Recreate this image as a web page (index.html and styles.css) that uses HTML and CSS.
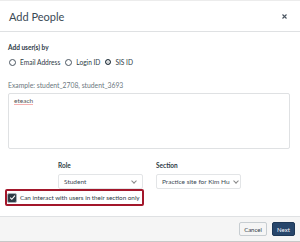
FILE: index.html
```html
<!DOCTYPE html>
<html lang="en">
<head>
<meta charset="UTF-8">
<title>Add People</title>
<link rel="stylesheet" href="styles.css">
</head>
<body>
<div class="modal">
  <div class="modal-header">
    <h1>Add People</h1>
    <svg class="close" width="5" height="5" viewBox="0 0 5 5"><path d="M0.5 0.5 L4.5 4.5 M4.5 0.5 L0.5 4.5" stroke="#4a5560" stroke-width="1.1"/></svg>
  </div>
  <div class="modal-body">
    <p class="field-label">Add user(s) by</p>
    <div class="radio-row">
      <label class="radio"><span class="dot"></span>Email Address</label>
      <label class="radio"><span class="dot"></span>Login ID</label>
      <label class="radio"><span class="dot on"></span>SIS ID</label>
    </div>
    <p class="hint">Example: student_2708, student_3693</p>
    <div class="textarea"><span class="typed">eteach</span></div>
    <div class="selects">
      <div class="select-group">
        <p class="field-label">Role</p>
        <div class="select">Student<span class="caret"></span></div>
      </div>
      <div class="select-group">
        <p class="field-label">Section</p>
        <div class="select">Practice site for Kim Hu<span class="caret"></span></div>
      </div>
    </div>
    <div class="check-row">
      <span class="checkbox">
        <svg width="7" height="7" viewBox="0 0 8 8"><path d="M1.3 4.2 L3.2 6 L6.8 1.8" fill="none" stroke="#fff" stroke-width="1.3"/></svg>
      </span>
      Can interact with users in their section only
    </div>
  </div>
  <div class="modal-footer">
    <button class="btn">Cancel</button>
    <button class="btn primary">Next</button>
  </div>
</div>
</body>
</html>
```

FILE: styles.css
```css
body {
  margin: 0;
  background: #fff;
  font-family: Lato, "Open Sans", sans-serif;
  color: #2d3b45;
}
.modal {
  width: 300px;
  height: 242px;
  box-sizing: border-box;
  border-top: 1px solid #ececec;
  border-bottom: 1px solid #c8c8c8;
  display: flex;
  flex-direction: column;
}
.modal-header {
  height: 30px;
  flex: none;
  border-bottom: 1px solid #dfe1e3;
  display: flex;
  align-items: center;
  justify-content: space-between;
  padding: 0 13px 0 9px;
}
.modal-header h1 {
  margin: 0;
  font-size: 11px;
  font-weight: 400;
  color: #3b4a55;
}
.modal-body {
  flex: 1;
  padding: 11px 8px 0;
}
.field-label {
  margin: 0;
  font-size: 6.5px;
  font-weight: 700;
  line-height: 10px;
}
.radio-row {
  display: flex;
  gap: 4px;
  margin-top: 4px;
  font-size: 6.6px;
  line-height: 10px;
}
.radio {
  display: flex;
  align-items: center;
  gap: 4px;
}
.dot {
  width: 5px;
  height: 5px;
  border: 1px solid #4a5560;
  border-radius: 50%;
  margin-left: 1px;
}
.dot.on {
  background: #2d3b45;
  box-shadow: inset 0 0 0 1.5px #fff;
  border-color: #2d3b45;
  border-width: 1.5px;
  width: 4px;
  height: 4px;
}
.hint {
  margin: 13px 0 0;
  font-size: 6.8px;
  line-height: 10px;
  color: #6b7780;
}
.textarea {
  margin-top: 3px;
  height: 56px;
  width: 282px;
  box-sizing: border-box;
  border: 1px solid #dfe1e3;
  border-radius: 2px;
  padding: 3px 5px;
  font-size: 6.5px;
  color: #555;
}
.typed {
  border-bottom: 1px solid #f5b0b0;
}
.selects {
  display: flex;
  gap: 13px;
  margin-top: 12px;
  padding-left: 50px;
}
.select-group .field-label {
  margin-bottom: 3px;
}
.select {
  width: 85px;
  height: 15px;
  box-sizing: border-box;
  border: 1px solid #e3e5e7;
  border-radius: 2px;
  font-size: 6.5px;
  white-space: nowrap;
  overflow: hidden;
  display: flex;
  align-items: center;
  justify-content: space-between;
  padding: 0 6px 0 5px;
  color: #3b4a55;
}
.caret {
  flex: none;
  width: 3px;
  height: 3px;
  border-right: 1px solid #888;
  border-bottom: 1px solid #888;
  transform: rotate(45deg);
  margin: -2px 0 0 4px;
}
.check-row {
  margin-left: -3px;
  width: 139px;
  height: 17px;
  box-sizing: border-box;
  border: 2px solid #a3172b;
  border-radius: 2px;
  display: flex;
  align-items: center;
  gap: 3px;
  font-size: 6.3px;
  white-space: nowrap;
  color: #2d3b45;
}
.checkbox {
  width: 10px;
  height: 10px;
  box-sizing: border-box;
  background: #2d3b45;
  border: 1px solid #a8b0b8;
  border-radius: 2px;
  display: flex;
  align-items: center;
  justify-content: center;
}
.modal-footer {
  height: 24px;
  flex: none;
  background: #f5f5f5;
  border-top: 1px solid #dfe1e3;
  display: flex;
  align-items: center;
  justify-content: flex-end;
  gap: 5px;
  padding-right: 5px;
}
.btn {
  font-family: Lato, sans-serif;
  font-size: 6px;
  height: 14px;
  padding: 0;
  width: 28px;
  border: 1px solid #c7cdd1;
  border-radius: 2px;
  background: #f5f5f5;
  color: #2d3b45;
}
.btn.primary {
  width: 23px;
  background: #27466b;
  border-color: #1e3856;
  color: #fff;
}
```
